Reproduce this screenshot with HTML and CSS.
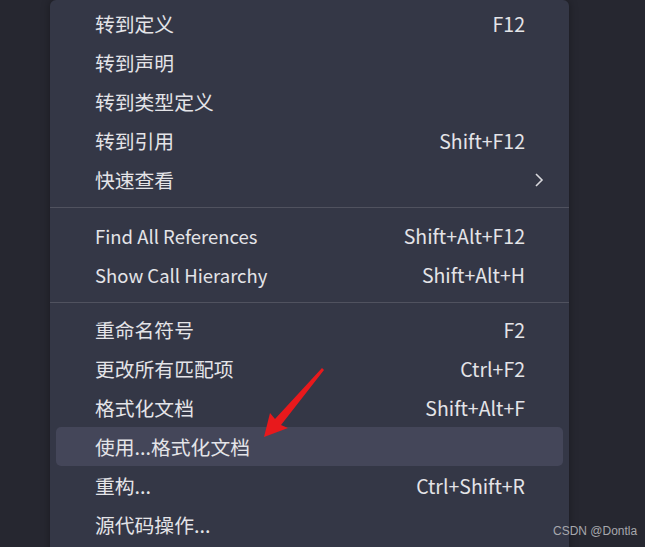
FILE: index.html
```html
<!doctype html>
<html lang="zh-CN">
<head>
	<meta charset="UTF-8">
	<title>Context Menu</title>
	<link rel="stylesheet" href="styles.css">
</head>
<body>
	<div class="stage">
		<ul class="menu">
			<li class="item"><span class="label">转到定义</span><span class="key">F12</span></li>
			<li class="item"><span class="label">转到声明</span></li>
			<li class="item"><span class="label">转到类型定义</span></li>
			<li class="item"><span class="label">转到引用</span><span class="key">Shift+F12</span></li>
			<li class="item"><span class="label">快速查看</span>
				<svg class="chevron" width="10" height="16" viewBox="0 0 10 16"><path d="M2 2 L8 8 L2 14" fill="none" stroke="#d8d8dc" stroke-width="1.6"/></svg>
			</li>
			<li class="sep"></li>
			<li class="item"><span class="label latin">Find All References</span><span class="key">Shift+Alt+F12</span></li>
			<li class="item"><span class="label latin">Show Call Hierarchy</span><span class="key">Shift+Alt+H</span></li>
			<li class="sep"></li>
			<li class="item"><span class="label">重命名符号</span><span class="key">F2</span></li>
			<li class="item"><span class="label">更改所有匹配项</span><span class="key">Ctrl+F2</span></li>
			<li class="item"><span class="label">格式化文档</span><span class="key">Shift+Alt+F</span></li>
			<li class="item active"><span class="label">使用...格式化文档</span></li>
			<li class="item"><span class="label">重构...</span><span class="key">Ctrl+Shift+R</span></li>
			<li class="item"><span class="label">源代码操作...</span></li>
		</ul>

		<!-- red annotation arrow drawn over the menu -->
		<svg class="arrow" width="645" height="547" viewBox="0 0 645 547">
			<polygon points="264,437 270,413 275,419 322,368 324,370 281,425 288,428" fill="#e8191c"/>
		</svg>

		<div class="watermark">CSDN @Dontla</div>
	</div>
</body>
</html>
```

FILE: styles.css
```css
html, body {
	margin: 0;
	padding: 0;
	background: #262730;
}

.stage {
	position: relative;
	width: 645px;
	height: 547px;
	overflow: hidden;
	font-family: "Noto Sans CJK SC", "Noto Sans", sans-serif;
	color: #e4e4e8;
}

.menu {
	list-style: none;
	margin: 0 0 0 50px;
	padding: 4px 6px 10px;
	width: 507px;
	background: #343746;
	border-radius: 6px;
	box-shadow: 0 0 8px rgba(0, 0, 0, .35);
}

.item {
	display: flex;
	align-items: center;
	justify-content: space-between;
	height: 39px;
	padding: 0 38px 0 39px;
	border-radius: 5px;
	font-size: 19.8px;
}

.item.active {
	background: #444659;
}

.label.latin {
	font-size: 18.5px;
}

.key {
	font-size: 19.5px;
}

.chevron {
	margin-right: -19px;
}

.sep {
	height: 1px;
	margin: 8px -6px 8px;
	background: #50525f;
}

.sep + .item + .item + .sep {
	margin-bottom: 7px;
}

.arrow {
	position: absolute;
	top: 0;
	left: 0;
}

.watermark {
	position: absolute;
	left: 553px;
	top: 524px;
	white-space: nowrap;
	font: 12px "Liberation Sans", Arial, sans-serif;
	color: #a7a8ad;
}
```
